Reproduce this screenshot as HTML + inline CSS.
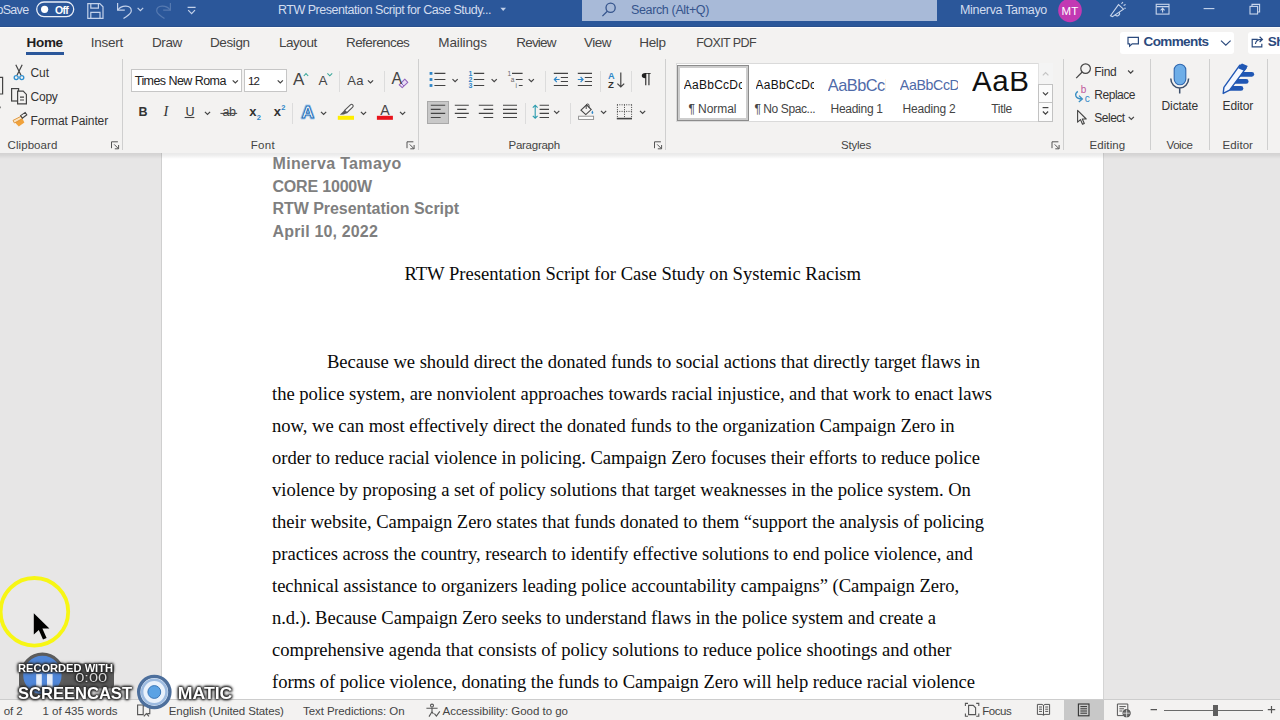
<!DOCTYPE html>
<html><head><meta charset="utf-8">
<style>
*{box-sizing:border-box;margin:0;padding:0}
html,body{width:1280px;height:720px;overflow:hidden;background:#e7e6e6;font-family:"Liberation Sans",sans-serif}
.a{position:absolute}
.t{position:absolute;white-space:nowrap;font-family:"Liberation Sans",sans-serif}
svg{position:absolute;left:0;top:0;overflow:visible}
.sep{position:absolute;top:59px;width:1px;height:91px;background:#cfcfcf}
.ms{position:absolute;width:1px;background:#dcdcdc}
</style></head><body>
<!-- document area -->
<div class="a" style="left:161px;top:152px;width:943px;height:548px;background:#fff;border-left:1px solid #cfcfcf;border-right:1px solid #d4d4d4"></div>
<!-- title bar -->
<div class="a" style="left:0;top:0;width:1280px;height:27px;background:#2b579a;border-bottom:1px solid #29508e"></div>
<div class="a" style="left:582px;top:0;width:355px;height:21px;background:#a8bad8"></div>
<!-- ribbon -->
<div class="a" style="left:0;top:27px;width:1280px;height:126px;background:#f3f2f1;border-top:1px solid #fcfcfc"></div>
<div class="a" style="left:0;top:153px;width:1280px;height:6px;background:linear-gradient(rgba(0,0,0,.085),rgba(0,0,0,.07) 35%,rgba(0,0,0,0))"></div>
<div class="a" style="left:26px;top:51.5px;width:38px;height:3px;background:#2b579a"></div>
<div class="a" style="left:1120px;top:32px;width:114px;height:21.5px;background:#fff;border-radius:3px"></div>
<div class="a" style="left:1248px;top:32px;width:40px;height:21.5px;background:#fff;border-radius:3px"></div>
<div class="sep" style="left:122px"></div><div class="sep" style="left:418px"></div><div class="sep" style="left:665px"></div>
<div class="sep" style="left:1063px"></div><div class="sep" style="left:1150px"></div><div class="sep" style="left:1209px"></div><div class="sep" style="left:1267px"></div>
<div class="ms" style="left:339px;top:71px;height:21px"></div><div class="ms" style="left:384px;top:71px;height:21px"></div><div class="ms" style="left:292px;top:103px;height:21px"></div>
<div class="ms" style="left:545px;top:71px;height:21px"></div><div class="ms" style="left:600px;top:71px;height:21px"></div><div class="ms" style="left:631px;top:71px;height:21px"></div>
<div class="ms" style="left:525px;top:103px;height:21px"></div><div class="ms" style="left:570px;top:103px;height:21px"></div>
<!-- font boxes -->
<div class="a" style="left:131px;top:69px;width:111px;height:23px;background:#fff;border:1px solid #c6c6c6"></div>
<div class="a" style="left:244px;top:69px;width:43px;height:23px;background:#fff;border:1px solid #c6c6c6"></div>
<!-- align-left selected -->
<div class="a" style="left:427px;top:101px;width:22px;height:23px;background:#c8c8c8;border:1px solid #a9a9a9"></div>
<!-- styles gallery -->
<div class="a" style="left:676px;top:63px;width:377px;height:59px;background:#fff;border:1px solid #dadada"></div>
<div class="a" style="left:677px;top:65px;width:72px;height:56px;background:#fff;border:1px solid #8c8c8c;box-shadow:inset 0 0 0 2px #cdcdcd"></div>
<div class="a" style="left:1038px;top:63px;width:15px;height:59px;background:#f4f4f4;border-left:1px solid #e2e2e2"></div>
<div class="a" style="left:1038px;top:84px;width:15px;height:19px;background:#fbfbfb;border:1px solid #c2c2c2"></div>
<div class="a" style="left:1038px;top:102px;width:15px;height:20px;background:#fbfbfb;border:1px solid #c2c2c2"></div>
<div class="a" style="left:972px;top:72px;width:60px;height:24px;overflow:hidden"><div class="a" style="white-space:nowrap;left:0;top:-7.6px;font-size:29.5px;line-height:34px;color:#111;letter-spacing:0.6px">AaB</div></div>
<!-- status bar -->
<div class="a" style="left:0;top:699px;width:1280px;height:21px;background:#f3f2f1;border-top:1px solid #cdcdcd"></div>
<div class="a" style="left:1064px;top:700px;width:40px;height:20px;background:#c8c8c8"></div>
<div class="a" style="left:1163.5px;top:709.5px;width:99px;height:1px;background:#6a6a6a"></div>
<div class="a" style="left:1213px;top:705px;width:5px;height:11px;background:#5e5e5e"></div>
<svg width="1280" height="160" viewBox="0 0 1280 160" fill="none" stroke-linecap="butt">
<!-- ===== title bar ===== -->
<g stroke="#e9eef8" stroke-width="1.3">
<rect x="36.7" y="2" width="37" height="14.6" rx="7.3"/>
<circle cx="44.6" cy="9.3" r="3.6" fill="#fff" stroke="none"/>
</g>
<g stroke="#c3d1ea" stroke-width="1.2">
<path d="M87.8 3.6h12l3.2 3.2v11.6H87.8z"/><path d="M90.8 3.6v4.6h7.6V3.6M90.8 18.4v-6h9.2v6"/>
<path d="M117.6 3v7.2h7.2"/><path d="M117.9 10C121.5 4.6 131.3 4.8 131.3 10.8c0 3.4-4.2 5-7.8 7.7"/>
<path d="M137.6 7.8l2.8 2.8 2.8-2.8"/>
<g opacity=".28"><path d="M170.4 3v7.2h-7.2"/><path d="M170.1 10C166.5 4.6 156.7 4.8 156.7 10.8c0 3.4 4.2 5 7.8 7.7"/></g>
<path d="M187.6 7.3h8M188.2 10.2l3.4 3.4 3.4-3.4"/>
</g>
<path d="M500.4 7.8h5.6l-2.8 3.2z" fill="#c3d1ea"/>
<g stroke="#35548c" stroke-width="1.3"><circle cx="610.6" cy="7.8" r="4.6"/><path d="M607.3 11.2l-4.9 4.9"/></g>
<circle cx="1070" cy="10.4" r="11.8" fill="#c239b3"/>
<g stroke="#c9d6ec" stroke-width="1.1">
<path d="M1110.5 15.8l8-11.2 5 4.6-11 7.4z"/><path d="M1115 14.6a2.3 2.3 0 0 0 4.2-2.4"/><path d="M1121.5 3.8l1.4-1.8M1123.6 5.6l2-1M1124.2 8.2h1.6"/>
<rect x="1156.2" y="4.3" width="12.8" height="9.8"/><path d="M1156.2 6.6h12.8M1162.6 12.6V8.4M1160.6 10.3l2-2 2 2"/>
<path d="M1203.6 8.6h10.8"/>
<rect x="1250" y="6.4" width="7.6" height="7.6"/><path d="M1252 6.4V4.4h7.6V12h-2"/>
</g>
<!-- ===== tab row right ===== -->
<g stroke="#2b4a7d" stroke-width="1.2">
<path d="M1128 37.4h10.4v6.4h-6.2l-2.6 2.4v-2.4H1128z"/>
<path d="M1221 40.6l4.8 4.6 4.8-4.6"/>
<path d="M1257.8 39.4h-5.6v7.4h9.6v-3"/><path d="M1255.4 44c.4-2.8 2.6-4.6 6-4.6M1259.6 36.8l2.8 2.6-2.8 2.6"/>
</g>
<!-- ===== clipboard ===== -->
<g stroke="#444" stroke-width="1.2">
<path d="M-3 77.3H2.6V94H-3"/><path d="M-1 107.4h1.6" stroke-width="1.6"/>
<path d="M15.8 64.8l5.2 10.4M22.2 64.8L17 75.2"/>
<rect x="11.6" y="88.6" width="7" height="12.4"/><path d="M17.6 91.2h5.6l3.2 3.2v9.4h-8.8z" fill="#f3f2f1"/><path d="M20 97.2h4M20 100h4"/>
</g>
<g stroke="#2e8fd0" stroke-width="1.3"><circle cx="16.2" cy="77.6" r="2"/><circle cx="21.8" cy="77.6" r="2"/></g>
<!-- format painter -->
<path d="M13 120.4l8.2-4.2 3.2 6.2-5.6 4z" fill="#f0a23b"/><path d="M13 120.4l8.2-4.2 1.2 2.4-8 4.4z" fill="#fbe3bf" stroke="#d98a2b" stroke-width=".8"/>
<path d="M20.6 115.6l4.6-3.2 1.6 2.4-4.4 3.4z" stroke="#444" stroke-width="1.1" fill="#f3f2f1"/>
<!-- dialog launchers -->
<g stroke="#555" stroke-width="1"><g><path d="M111.5 148.2v-6.4h6.4M114.2 144.4l4.2 4.2M118.6 145v3.8h-3.8"/></g>
<g transform="translate(295.5,0)"><path d="M111.5 148.2v-6.4h6.4M114.2 144.4l4.2 4.2M118.6 145v3.8h-3.8"/></g><g transform="translate(543,0)"><path d="M111.5 148.2v-6.4h6.4M114.2 144.4l4.2 4.2M118.6 145v3.8h-3.8"/></g><g transform="translate(940.5,0)"><path d="M111.5 148.2v-6.4h6.4M114.2 144.4l4.2 4.2M118.6 145v3.8h-3.8"/></g></g>
<!-- ===== font group ===== -->
<g stroke="#444" stroke-width="1.2">
<g><path d="M232.700 80.300l2.600 2.600 2.600-2.600"/></g>
<g transform="translate(45,0)"><path d="M232.700 80.300l2.600 2.600 2.600-2.600"/></g><g transform="translate(135.2,0)"><path d="M232.700 80.300l2.600 2.600 2.600-2.600"/></g>
<g transform="translate(-27.8,31.5)"><path d="M232.700 80.300l2.600 2.600 2.600-2.600"/></g><g transform="translate(88.3,31.5)"><path d="M232.700 80.300l2.600 2.600 2.600-2.600"/></g><g transform="translate(128.2,31.5)"><path d="M232.700 80.300l2.600 2.600 2.600-2.600"/></g><g transform="translate(167.3,31.5)"><path d="M232.700 80.300l2.600 2.600 2.600-2.600"/></g>
<!-- paragraph chevrons -->
<g transform="translate(219.8,-1.2)"><path d="M232.700 80.300l2.600 2.600 2.600-2.600"/></g><g transform="translate(258.9,-1.2)"><path d="M232.700 80.300l2.600 2.600 2.600-2.600"/></g><g transform="translate(296,-1.2)"><path d="M232.700 80.300l2.600 2.600 2.600-2.600"/></g>
<g transform="translate(321.4,30.6)"><path d="M232.700 80.300l2.600 2.600 2.600-2.600"/></g><g transform="translate(368.3,30.6)"><path d="M232.700 80.300l2.600 2.600 2.600-2.600"/></g><g transform="translate(407.3,30.6)"><path d="M232.700 80.300l2.600 2.600 2.600-2.600"/></g>
<!-- styles scroll chevrons -->
<g transform="translate(810.2,12)"><path d="M232.700 80.300l2.600 2.600 2.600-2.600"/></g><g transform="translate(810.2,31.2)"><path d="M232.700 80.300l2.600 2.600 2.600-2.600"/></g><path d="M1042.6 107.6h5.8"/>
<!-- editing chevrons -->
<g transform="translate(895.4,-9.8)"><path d="M232.700 80.300l2.600 2.600 2.600-2.600"/></g><g transform="translate(896,36.6)"><path d="M232.700 80.300l2.600 2.600 2.600-2.600"/></g>
</g>
<path d="M1042.8 75.4l2.8-2.8 2.8 2.8" stroke="#c4c4c4" stroke-width="1.2"/>
<!-- grow/shrink font -->
<g stroke="#444" stroke-width="1.25">
</g>
<g stroke="#3aa89a" stroke-width="1.1"><path d="M303.8 76l2.2-2.4 2.2 2.4M327.4 73.4l2.4 2.4 2.4-2.4"/></g>
<!-- clear formatting -->
<path d="M399.200 84.800l5.600-5.600 3 3.100-5.600 5.300z" fill="#eadcf5" stroke="#9468bd" stroke-width="1.100" stroke-linejoin="round"/><path d="M401 83l3 3" stroke="#9468bd" stroke-width="1"/>
<!-- underline, strike, sub/super -->
<path d="M184.6 117.5h9.8" stroke="#444" stroke-width="1.1"/>
<path d="M220.4 113.4h16.8" stroke="#444" stroke-width="1"/>
<!-- text effects A -->
<text x="301.600" y="117.900" font-family="Liberation Sans,sans-serif" font-weight="bold" font-size="17.400" fill="#fff" stroke="#9cc6ee" stroke-width="3" stroke-linejoin="round" opacity=".8">A</text><text x="301.600" y="117.900" font-family="Liberation Sans,sans-serif" font-weight="bold" font-size="17.400" fill="#fff" stroke="#1f6fb8" stroke-width="1.050" stroke-linejoin="round">A</text>
<!-- highlighter -->
<rect x="337.8" y="115.8" width="16.2" height="4" fill="#ffee00"/>
<path d="M344.600 110.400l5.800-5.600a1.600 1.600 0 0 1 2.300 2.300l-5.800 5.600z" stroke="#555" stroke-width="1.100" fill="#fafafa"/><path d="M344.400 110.200l2.800 2.800-3.400 1.600-4 .2z" fill="#5a5a5a"/>
<!-- font color -->
<rect x="376.9" y="115.8" width="16" height="4" fill="#e8141c"/>
<!-- ===== paragraph row 1 ===== -->
<g fill="#2e86c8"><rect x="429.6" y="72" width="2.8" height="2.8"/><rect x="429.6" y="78.1" width="2.8" height="2.8"/><rect x="429.6" y="84.1" width="2.8" height="2.8"/></g>
<g stroke="#444" stroke-width="1.1">
<path d="M434.4 73.4h11M434.4 79.5h11M434.4 85.5h11"/>
<path d="M473.8 73.4h10.4M473.8 79.5h10.4M473.8 85.5h10.4"/>
<path d="M512 73.4h10.6M515.8 79.5h6.8M518.8 85.5h3.8"/>
<path d="M553.8 73.4h14.2M560.8 77.5h7.2M560.8 81.5h7.2M553.8 85.5h14.2"/>
<path d="M577.8 73.4h14.2M584.8 77.5h7.2M584.8 81.5h7.2M577.8 85.5h14.2"/>
<path d="M620.8 72.6v14M617.4 83.6l3.4 3.4 3.4-3.4" stroke-width="1.2"/>
</g>
<g stroke="#2e86c8" stroke-width="1.1">
<path d="M554.4 79.5h5.2M556.8 77l-2.5 2.5 2.5 2.5"/><path d="M577.8 79.5h5.2M580.6 77l2.5 2.5-2.5 2.5"/>
</g>
<!-- ===== paragraph row 2 ===== -->
<g stroke="#444" stroke-width="1.1">
<path d="M430.8 105.3h14.4M430.8 109.4h9.8M430.8 113.4h14.4M430.8 117.5h9.8"/>
<path d="M454.8 105.3h14M457.2 109.4h9.2M454.8 113.4h14M457.2 117.5h9.2"/>
<path d="M478.8 105.3h14.4M483.6 109.4h9.6M478.8 113.4h14.4M483.6 117.5h9.6"/>
<path d="M503 105.3h14M503 109.4h14M503 113.4h14M503 117.5h14"/>
<path d="M539.6 105.3h9.4M539.6 109.4h9.4M539.6 113.4h9.4M539.6 117.5h9.4"/>
</g>
<path d="M535.2 105.4v12.8M532.8 107.6l2.4-2.4 2.4 2.4M532.8 115.8l2.4 2.4 2.4-2.4" stroke="#2a9cae" stroke-width="1.1"/>
<!-- shading -->
<rect x="578.6" y="116.2" width="15" height="3.2" fill="#fff" stroke="#8a8a8a" stroke-width=".9"/>
<path d="M581 110.2l5.6-5.4 4.6 4.8-5.4 5z" stroke="#444" stroke-width="1.1" fill="#f3f2f1"/><path d="M586.2 109v-3.6a1.4 1.4 0 0 1 2.8 0v2" stroke="#444" stroke-width="1"/>
<path d="M592.4 110.400c1.200 1.600 1.200 2.800 0 3.600-1.200-.8-1.200-2 0-3.600z" fill="#2e86c8"/>
<!-- borders -->
<g stroke="#444"><path d="M617 104.8h15M617 111.4h15M617.4 104.6v13.600M624.5 104.600v13.600M631.600 104.600v13.600" stroke-width="1" stroke-dasharray="1 1.300"/><path d="M616.800 118.600h15.200" stroke-width="1.600"/></g>
<!-- ===== editing ===== -->
<g stroke="#444" stroke-width="1.2">
<circle cx="1085.600" cy="68.600" r="4.800"/><path d="M1082.200 72l-6 6.200"/>
<path d="M1077.600 110.400v11.800l2.900-2.600 2 4.600 1.800-.8-2-4.400h3.900z" stroke-width="1.100" stroke-linejoin="round"/>
</g>
<path d="M1077.800 91.400C1074.400 93.800 1074.600 98.600 1082 99M1079 95.600l3.400 3.400-3.600 3" stroke="#3a8fc4" stroke-width="1.300"/>
<!-- dictate -->
<rect x="1174.200" y="64.200" width="11.600" height="20.600" rx="5.800" fill="#6eaee8" stroke="#2f68b0" stroke-width="1.100"/>
<path d="M1170.800 78.400a8.900 9.600 0 0 0 17.800 0M1179.700 88.400v5.200" stroke="#3d4f6b" stroke-width="1.500"/>
<!-- editor -->
<g fill="#2057b4"><path d="M1240.600 72h11.200a2.350 2.350 0 0 1 0 4.700h-14.400z"/><path d="M1236 79.100h10.200a2.350 2.350 0 0 1 0 4.700h-13.600z"/><path d="M1230.800 86.100h10.200a2.350 2.350 0 0 1 0 4.700h-13.400z"/></g>
<path d="M1239.800 65.200l6.400 2.600-16.600 22.400-6.400 3.200.7-6z" fill="#f4f8ff" stroke="#2057b4" stroke-width="1.400" stroke-linejoin="round"/>
<path d="M1239.800 65.200l2.200-1.600 5.800 2.400-1.600 2.600-1.700 2.400-6.400-2.800z" fill="#2057b4"/>
</svg>
<!-- status + overlays -->
<svg width="1280" height="720" viewBox="0 0 1280 720" fill="none">
<g stroke="#555" stroke-width="1.100">
<path d="M137.600 705h5.600v9.600h-5.600zM143.200 706.200l3-1.200h3.600v8.600h-2.400M143.800 716.400l2.600-2.800 2.600 2.800"/>
<circle cx="432" cy="705.600" r="1.500"/><path d="M426.400 708.200h11.200M432 708.200v3.600M432 711.800l-3 4.800M432 711.800l1.400 2.200M434.400 713.600l2 2.400 3.400-4.600"/>
<path d="M965.400 706v-2.600h2.600M978.800 706v-2.600h-2.600M965.400 713.600v2.600h2.600M978.800 713.600v2.600h-2.600M968.600 705.400h4.600l2.400 2.400v6.800h-7z"/>
<path d="M1043.500 705.200v9.800M1037.400 704.400h4.600l1.500 1 1.500-1h4.600v10h-4.600l-1.500.8-1.500-.8h-4.600zM1039 707h3M1039 709.200h3M1039 711.400h3M1045.200 707h3M1045.200 709.200h3M1045.200 711.400h3" stroke-width="1"/>
<rect x="1078.400" y="704" width="10.600" height="11.800" stroke="#333"/><path d="M1080.400 706.600h6.600M1080.400 708.800h6.600M1080.400 711h6.600M1080.400 713.200h6.600" stroke="#333" stroke-width="1"/>
<path d="M1123.400 715.600h-6v-11.600h10.400v5M1119.400 706.600h6.400M1119.400 708.800h4.600M1119.400 711h3" stroke-width="1"/><circle cx="1126.600" cy="713.200" r="3.600" fill="#666"/><path d="M1123 713.200h7.200M1126.600 709.600v7.200" stroke="#f3f3f3" stroke-width=".7"/>
<path d="M1150.600 709.600h6.400M1267.800 709.600h7.400M1271.500 705.900v7.400" stroke-width="1.200"/>
</g>
<!-- cursor highlight -->
<circle cx="34.400" cy="611.800" r="33.800" stroke="#f7f614" stroke-width="3.800" fill="rgba(255,255,255,.10)"/>
<path d="M33.800 613.200v21.200l5-4.400 4.200 9.600 3.600-1.600-4.200-9.400h7z" fill="#000"/>
<!-- watermark -->
<rect x="19" y="663.500" width="95" height="25" rx="4" fill="#3f3f3f" opacity=".85"/>
<circle cx="42.400" cy="675" r="20.500" fill="#4f86d8"/><circle cx="42.400" cy="675" r="20.800" stroke="#5c5c5c" stroke-width="3.200"/>
<rect x="36.200" y="674" width="5.600" height="14" fill="#e4ecf8"/><rect x="47" y="674" width="5.600" height="14" fill="#e4ecf8"/>
<circle cx="154.300" cy="692" r="15.600" fill="#e9f1fb" stroke="#4d6f9c" stroke-width="3.400"/><circle cx="154.300" cy="692" r="12.200" stroke="#9dbbe0" stroke-width="2.600"/><circle cx="154.300" cy="692" r="6.400" fill="#5aa2e4" stroke="#3c78b8" stroke-width="1"/>
<g font-family="Liberation Sans,sans-serif" font-weight="bold" fill="#fff" style="filter:drop-shadow(0 0 1.2px #222) drop-shadow(0 0 1.2px #222) drop-shadow(0 0 1px #333)">
<text x="75.200" y="682.200" font-size="12" fill="#d8d8d8" stroke="none" font-weight="normal" textLength="32" lengthAdjust="spacingAndGlyphs">0:00</text>
<text x="18" y="672.400" font-size="11" textLength="95" lengthAdjust="spacingAndGlyphs">RECORDED WITH</text>
<text x="18" y="698.800" font-size="17" textLength="114" lengthAdjust="spacingAndGlyphs">SCREENCAST</text>
<text x="177.700" y="698.800" font-size="17" textLength="54.700" lengthAdjust="spacingAndGlyphs">MATIC</text>
</g>
</svg>

<div class="t" style="left:-3.60px;top:1.90px;letter-spacing:-0.691px;font-size:12.5px;line-height:16px;color:#d3ddef;">oSave</div>
<div class="t" style="left:55.00px;top:2.60px;letter-spacing:-0.724px;font-size:10.5px;line-height:14px;color:#fff;font-weight:bold">Off</div>
<div class="t" style="left:278.00px;top:1.90px;letter-spacing:-0.487px;font-size:12.5px;line-height:16px;color:#d3ddef;">RTW Presentation Script for Case Study...</div>
<div class="t" style="left:631.00px;top:1.90px;letter-spacing:-0.358px;font-size:12.5px;line-height:16px;color:#35548c">Search (Alt+Q)</div>
<div class="t" style="left:960.00px;top:2.20px;letter-spacing:-0.320px;font-size:12.5px;line-height:16px;color:#d3ddef;">Minerva Tamayo</div>
<div class="t" style="left:1061.50px;top:3.60px;letter-spacing:0.195px;font-size:11.5px;line-height:15px;color:#fff">MT</div>
<div class="t" style="left:26.60px;top:34.30px;letter-spacing:-0.329px;font-size:13.5px;line-height:18px;color:#1f1f1f;font-weight:bold">Home</div>
<div class="t" style="left:90.80px;top:34.30px;letter-spacing:-0.244px;font-size:13.5px;line-height:18px;color:#444">Insert</div>
<div class="t" style="left:152.00px;top:34.30px;letter-spacing:-0.379px;font-size:13.5px;line-height:18px;color:#444">Draw</div>
<div class="t" style="left:210.00px;top:34.30px;letter-spacing:-0.405px;font-size:13.5px;line-height:18px;color:#444">Design</div>
<div class="t" style="left:278.90px;top:34.30px;letter-spacing:-0.441px;font-size:13.5px;line-height:18px;color:#444">Layout</div>
<div class="t" style="left:346.00px;top:34.30px;letter-spacing:-0.575px;font-size:13.5px;line-height:18px;color:#444">References</div>
<div class="t" style="left:438.30px;top:34.30px;letter-spacing:-0.116px;font-size:13.5px;line-height:18px;color:#444">Mailings</div>
<div class="t" style="left:516.20px;top:34.30px;letter-spacing:-0.778px;font-size:13.5px;line-height:18px;color:#444">Review</div>
<div class="t" style="left:584.00px;top:34.30px;letter-spacing:-0.508px;font-size:13.5px;line-height:18px;color:#444">View</div>
<div class="t" style="left:639.30px;top:34.30px;letter-spacing:-0.366px;font-size:13.5px;line-height:18px;color:#444">Help</div>
<div class="t" style="left:696.20px;top:35.30px;letter-spacing:-0.574px;font-size:12.5px;line-height:16px;color:#444">FOXIT PDF</div>
<div class="t" style="left:1143.50px;top:33.40px;letter-spacing:-0.596px;font-size:13.5px;line-height:18px;color:#2b4a7d;font-weight:bold">Comments</div>
<div class="t" style="left:1267.70px;top:33.40px;letter-spacing:-0.483px;font-size:13.5px;line-height:18px;color:#2b4a7d;font-weight:bold">Sh</div>
<div class="t" style="left:30.50px;top:64.80px;letter-spacing:-0.096px;font-size:12px;line-height:16px;color:#333">Cut</div>
<div class="t" style="left:30.50px;top:88.70px;letter-spacing:-0.229px;font-size:12px;line-height:16px;color:#333">Copy</div>
<div class="t" style="left:30.50px;top:112.50px;letter-spacing:-0.133px;font-size:12px;line-height:16px;color:#333">Format Painter</div>
<div class="t" style="left:7.60px;top:137.70px;letter-spacing:0.063px;font-size:11.5px;line-height:15px;color:#444">Clipboard</div>
<div class="t" style="left:134.80px;top:73.10px;letter-spacing:-0.561px;font-size:12.5px;line-height:16px;color:#222">Times New Roma</div>
<div class="t" style="left:248.00px;top:74.10px;letter-spacing:-0.898px;font-size:11.5px;line-height:15px;color:#222">12</div>
<div class="t" style="left:250.80px;top:137.70px;letter-spacing:0.271px;font-size:11.5px;line-height:15px;color:#444">Font</div>
<div class="t" style="left:508.50px;top:137.70px;letter-spacing:-0.258px;font-size:11.5px;line-height:15px;color:#444">Paragraph</div>
<div class="t" style="left:841.00px;top:137.70px;letter-spacing:-0.221px;font-size:11.5px;line-height:15px;color:#444">Styles</div>
<div class="t" style="left:1089.40px;top:137.70px;letter-spacing:0.118px;font-size:11.5px;line-height:15px;color:#444">Editing</div>
<div class="t" style="left:1166.60px;top:137.70px;letter-spacing:-0.468px;font-size:11.5px;line-height:15px;color:#444">Voice</div>
<div class="t" style="left:1222.60px;top:137.70px;letter-spacing:0.059px;font-size:11.5px;line-height:15px;color:#444">Editor</div>
<div class="t" style="left:683.80px;top:77.40px;letter-spacing:0.252px;width:58.2px;overflow:hidden;font-size:12px;line-height:16px;color:#111">AaBbCcDc</div>
<div class="t" style="left:755.60px;top:77.40px;letter-spacing:0.252px;width:58.4px;overflow:hidden;font-size:12px;line-height:16px;color:#111">AaBbCcDc</div>
<div class="t" style="left:827.80px;top:75.20px;letter-spacing:-0.538px;width:58.2px;overflow:hidden;font-size:16.4px;line-height:21px;color:#4f6aa8">AaBbCcD</div>
<div class="t" style="left:899.80px;top:75.70px;letter-spacing:-0.373px;width:58.2px;overflow:hidden;font-size:14.2px;line-height:18px;color:#4f6aa8">AaBbCcDd</div>
<div class="t" style="left:688.40px;top:101.10px;letter-spacing:-0.057px;font-size:12px;line-height:16px;color:#444">¶ Normal</div>
<div class="t" style="left:754.40px;top:101.10px;letter-spacing:-0.409px;font-size:12px;line-height:16px;color:#444">¶ No Spac...</div>
<div class="t" style="left:830.60px;top:101.10px;letter-spacing:-0.291px;font-size:12px;line-height:16px;color:#444">Heading 1</div>
<div class="t" style="left:902.50px;top:101.10px;letter-spacing:-0.180px;font-size:12px;line-height:16px;color:#444">Heading 2</div>
<div class="t" style="left:991.30px;top:101.10px;letter-spacing:-0.327px;font-size:12px;line-height:16px;color:#444">Title</div>
<div class="t" style="left:1094.30px;top:63.70px;letter-spacing:-0.311px;font-size:12px;line-height:16px;color:#333">Find</div>
<div class="t" style="left:1094.30px;top:86.80px;letter-spacing:-0.476px;font-size:12px;line-height:16px;color:#333">Replace</div>
<div class="t" style="left:1094.30px;top:109.70px;letter-spacing:-0.493px;font-size:12px;line-height:16px;color:#333">Select</div>
<div class="t" style="left:1080.80px;top:83.40px;letter-spacing:0.000px;font-size:10px;line-height:13px;color:#c0579b">b</div>
<div class="t" style="left:1084.80px;top:92.00px;letter-spacing:0.000px;font-size:10px;line-height:13px;color:#2e86c8">c</div>
<div class="t" style="left:1161.50px;top:97.60px;letter-spacing:-0.094px;font-size:12px;line-height:16px;color:#333">Dictate</div>
<div class="t" style="left:1222.60px;top:97.60px;letter-spacing:-0.160px;font-size:12px;line-height:16px;color:#333">Editor</div>
<div class="t" style="left:347.20px;top:71.60px;letter-spacing:0.447px;font-size:13px;line-height:17px;color:#444">Aa</div>
<div class="t" style="left:138.40px;top:103.80px;letter-spacing:0.000px;font-size:12.5px;line-height:16px;color:#333;font-weight:bold">B</div>
<div class="t" style="left:163.40px;top:101.80px;letter-spacing:0.000px;font-size:14.5px;line-height:19px;color:#333;font-style:italic;font-family:'Liberation Serif',serif">I</div>
<div class="t" style="left:185.50px;top:103.60px;letter-spacing:-0.831px;font-size:12.5px;line-height:16px;color:#333">U</div>
<div class="t" style="left:222.60px;top:103.80px;letter-spacing:-0.603px;font-size:12.5px;line-height:16px;color:#444">ab</div>
<div class="t" style="left:249.20px;top:102.80px;letter-spacing:0.000px;font-size:13px;line-height:17px;color:#333;font-weight:bold">x</div>
<div class="t" style="left:256.80px;top:112.60px;letter-spacing:0.000px;font-size:7.5px;line-height:10px;color:#2e86c8;font-weight:bold">2</div>
<div class="t" style="left:273.80px;top:102.80px;letter-spacing:0.000px;font-size:13px;line-height:17px;color:#333;font-weight:bold">x</div>
<div class="t" style="left:281.20px;top:103.00px;letter-spacing:0.000px;font-size:7.5px;line-height:10px;color:#2e86c8;font-weight:bold">2</div>
<div class="t" style="left:292.90px;top:68.80px;letter-spacing:0.000px;font-size:17px;line-height:22px;color:#444">A</div>
<div class="t" style="left:318.60px;top:71.80px;letter-spacing:0.000px;font-size:13.4px;line-height:17px;color:#444">A</div>
<div class="t" style="left:391.60px;top:68.40px;letter-spacing:0.000px;font-size:16px;line-height:21px;color:#444">A</div>
<div class="t" style="left:380.30px;top:100.80px;letter-spacing:0.000px;font-size:14.2px;line-height:18px;color:#444">A</div>
<div class="t" style="left:607.90px;top:69.90px;letter-spacing:0.000px;font-size:9.2px;line-height:12px;color:#2e86c8;font-weight:bold">A</div>
<div class="t" style="left:608.10px;top:78.50px;letter-spacing:0.000px;font-size:9.6px;line-height:12px;color:#333;font-weight:bold">Z</div>
<div class="t" style="left:468.60px;top:68.80px;letter-spacing:0.000px;font-size:7px;line-height:9px;color:#2e86c8;font-weight:bold">1</div>
<div class="t" style="left:468.60px;top:74.90px;letter-spacing:0.000px;font-size:7px;line-height:9px;color:#2e86c8;font-weight:bold">2</div>
<div class="t" style="left:468.60px;top:80.90px;letter-spacing:0.000px;font-size:7px;line-height:9px;color:#2e86c8;font-weight:bold">3</div>
<div class="t" style="left:507.60px;top:69.60px;letter-spacing:0.000px;font-size:6.5px;line-height:8px;color:#666">1</div>
<div class="t" style="left:510.80px;top:75.60px;letter-spacing:0.000px;font-size:6.5px;line-height:8px;color:#666">a</div>
<div class="t" style="left:515.60px;top:81.80px;letter-spacing:0.000px;font-size:6.5px;line-height:8px;color:#666">i</div>
<div class="t" style="left:641.40px;top:69.40px;letter-spacing:0.000px;font-size:14px;line-height:18px;color:#222;transform:scaleX(1.4);transform-origin:0 0">¶</div>
<div class="t" style="left:3.80px;top:703.50px;letter-spacing:-0.122px;font-size:11.5px;line-height:15px;color:#444">of 2</div>
<div class="t" style="left:42.50px;top:703.50px;letter-spacing:-0.031px;font-size:11.5px;line-height:15px;color:#444">1 of 435 words</div>
<div class="t" style="left:168.80px;top:703.50px;letter-spacing:-0.114px;font-size:11.5px;line-height:15px;color:#444">English (United States)</div>
<div class="t" style="left:303.00px;top:703.50px;letter-spacing:-0.070px;font-size:11.5px;line-height:15px;color:#444">Text Predictions: On</div>
<div class="t" style="left:442.50px;top:703.50px;letter-spacing:-0.017px;font-size:11.5px;line-height:15px;color:#444">Accessibility: Good to go</div>
<div class="t" style="left:982.20px;top:704.30px;letter-spacing:-0.426px;font-size:11.5px;line-height:15px;color:#444">Focus</div>
<div class="t" style="left:272.50px;top:152.80px;letter-spacing:0.343px;font-size:16px;line-height:21px;color:#7f7f7f;font-weight:bold">Minerva Tamayo</div>
<div class="t" style="left:272.50px;top:175.50px;letter-spacing:-0.188px;font-size:16px;line-height:21px;color:#7f7f7f;font-weight:bold">CORE 1000W</div>
<div class="t" style="left:272.50px;top:197.80px;letter-spacing:-0.047px;font-size:16px;line-height:21px;color:#7f7f7f;font-weight:bold">RTW Presentation Script</div>
<div class="t" style="left:272.50px;top:220.60px;letter-spacing:0.166px;font-size:16px;line-height:21px;color:#7f7f7f;font-weight:bold">April 10, 2022</div>
<div class="t" style="left:404.50px;top:262.00px;letter-spacing:-0.011px;font-size:18.6px;line-height:24px;color:#0a0a0a;font-family:'Liberation Serif',serif">RTW Presentation Script for Case Study on Systemic Racism</div>
<div class="t" style="left:327.00px;top:350.00px;letter-spacing:-0.027px;font-size:18.6px;line-height:24px;color:#0a0a0a;font-family:'Liberation Serif',serif">Because we should direct the donated funds to social actions that directly target flaws in</div>
<div class="t" style="left:272.00px;top:382.00px;letter-spacing:-0.040px;font-size:18.6px;line-height:24px;color:#0a0a0a;font-family:'Liberation Serif',serif">the police system, are nonviolent approaches towards racial injustice, and that work to enact laws</div>
<div class="t" style="left:272.00px;top:414.00px;letter-spacing:-0.020px;font-size:18.6px;line-height:24px;color:#0a0a0a;font-family:'Liberation Serif',serif">now, we can most effectively direct the donated funds to the organization Campaign Zero in</div>
<div class="t" style="left:272.00px;top:446.00px;letter-spacing:-0.037px;font-size:18.6px;line-height:24px;color:#0a0a0a;font-family:'Liberation Serif',serif">order to reduce racial violence in policing. Campaign Zero focuses their efforts to reduce police</div>
<div class="t" style="left:272.00px;top:478.00px;letter-spacing:-0.033px;font-size:18.6px;line-height:24px;color:#0a0a0a;font-family:'Liberation Serif',serif">violence by proposing a set of policy solutions that target weaknesses in the police system. On</div>
<div class="t" style="left:272.00px;top:510.00px;letter-spacing:-0.044px;font-size:18.6px;line-height:24px;color:#0a0a0a;font-family:'Liberation Serif',serif">their website, Campaign Zero states that funds donated to them “support the analysis of policing</div>
<div class="t" style="left:272.00px;top:542.00px;letter-spacing:-0.025px;font-size:18.6px;line-height:24px;color:#0a0a0a;font-family:'Liberation Serif',serif">practices across the country, research to identify effective solutions to end police violence, and</div>
<div class="t" style="left:272.00px;top:574.00px;letter-spacing:-0.038px;font-size:18.6px;line-height:24px;color:#0a0a0a;font-family:'Liberation Serif',serif">technical assistance to organizers leading police accountability campaigns” (Campaign Zero,</div>
<div class="t" style="left:272.00px;top:606.00px;letter-spacing:-0.041px;font-size:18.6px;line-height:24px;color:#0a0a0a;font-family:'Liberation Serif',serif">n.d.). Because Campaign Zero seeks to understand flaws in the police system and create a</div>
<div class="t" style="left:272.00px;top:638.00px;letter-spacing:-0.036px;font-size:18.6px;line-height:24px;color:#0a0a0a;font-family:'Liberation Serif',serif">comprehensive agenda that consists of policy solutions to reduce police shootings and other</div>
<div class="t" style="left:272.00px;top:670.00px;letter-spacing:-0.041px;font-size:18.6px;line-height:24px;color:#0a0a0a;font-family:'Liberation Serif',serif">forms of police violence, donating the funds to Campaign Zero will help reduce racial violence</div>
</body></html>
